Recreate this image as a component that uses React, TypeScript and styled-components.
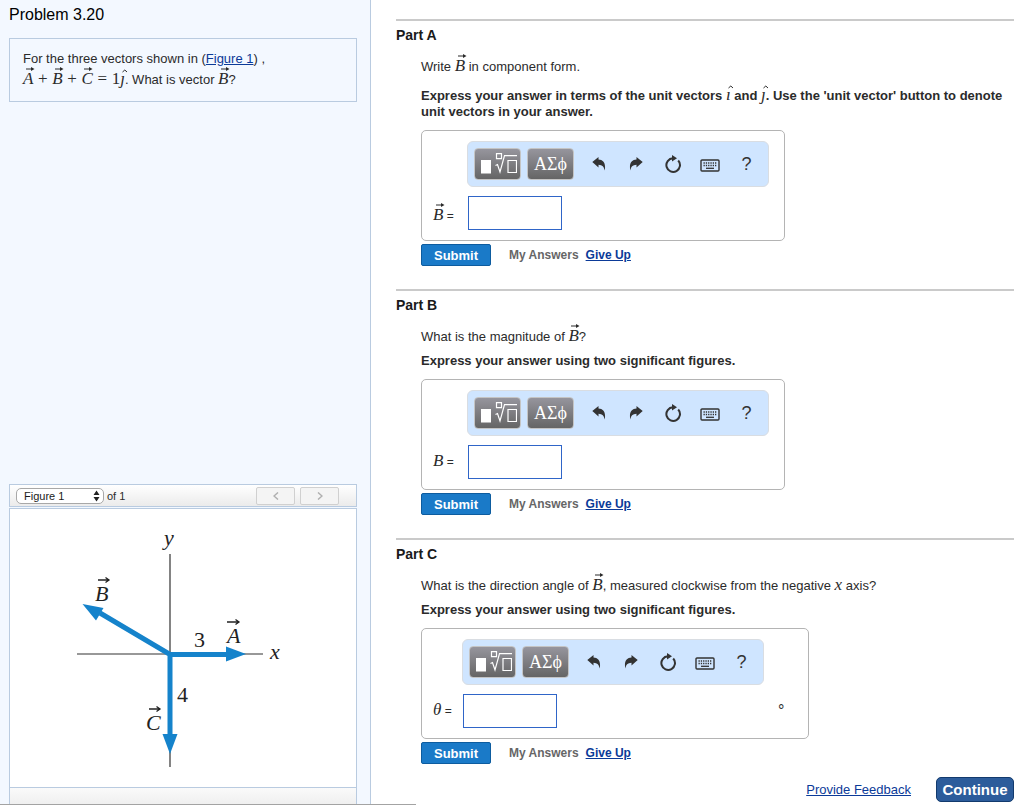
import React, { useId } from "react";
import styled, { createGlobalStyle } from "styled-components";

const GlobalStyle = createGlobalStyle`
  * { box-sizing: border-box; }
  body {
    margin: 0;
    background: #fff;
    color: #2b2b2b;
    font: 13px/16px "Liberation Sans", Arial, sans-serif;
  }
  h1, h2, p, figure { margin: 0; }
  button, input, select { font-family: inherit; }
`;

const Page = styled.div`
  display: grid;
  grid-template-columns: 371px minmax(0, 1fr);
  min-height: 100vh;
`;

const Sidebar = styled.aside`
  display: flex;
  flex-direction: column;
  padding: 6px 13px 0 9px;
  background: #f3f8ff;
  border-right: 1px solid #b9cbe0;
`;

const ProblemTitle = styled.h1`
  font-size: 16px;
  font-weight: 400;
  line-height: 18px;
  color: #000;
`;

const ProblemBox = styled.p`
  margin-top: 14px;
  padding: 12px 13px 13px;
  border: 1px solid #b9cbe0;
`;

const TextLink = styled.a<{ $strong?: boolean }>`
  color: #0b3a98;
  font-weight: ${(p) => (p.$strong ? 700 : 400)};
  text-decoration: underline;
`;

const FigurePanel = styled.section`
  margin-top: auto;
`;

const FigureBar = styled.div`
  display: flex;
  align-items: center;
  gap: 3px;
  height: 23px;
  padding: 0 17px 0 6px;
  border: 1px solid #b9cbe0;
  background: linear-gradient(#fff, #ebebeb);
  font-size: 11px;
`;

const SelectWrap = styled.span`
  display: grid;
  align-items: center;
  width: 88px;
  & > * { grid-area: 1 / 1; }
  & > svg { justify-self: end; margin-right: 4px; pointer-events: none; }
`;

const FigureSelect = styled.select`
  appearance: none;
  width: 100%;
  height: 16px;
  padding: 0 7px;
  border: 1px solid #a8a8a8;
  border-radius: 5px;
  background: #fff;
  color: #1a1a1a;
  font-size: 11px;
  line-height: 14px;
`;

const Pager = styled.span`
  display: flex;
  gap: 5px;
  margin-left: auto;
`;

const PagerButton = styled.button`
  display: flex;
  align-items: center;
  justify-content: center;
  width: 39px;
  height: 18px;
  padding: 0;
  border: 1px solid #d0d0d0;
  border-radius: 2px;
  background: #f4f4f4;
  color: #b0b0b0;
`;

const FigureFrame = styled.figure`
  margin-top: 1px;
  border: 1px solid #b9cbe0;
  border-bottom: 0;
  background: #fff;
  & > svg { display: block; }
`;

const FigureFooter = styled.div`
  height: 18px;
  border-top: 1px solid #b9cbe0;
  background: linear-gradient(#fafafa, #efefef);
`;

const StatusEdge = styled.div`
  position: fixed;
  left: 0;
  bottom: 0;
  width: 416px;
  height: 1px;
  background: #a3a3a3;
`;

const Main = styled.main`
  padding: 19px 10px 2px 25px;
`;

const PartSection = styled.section`
  padding: 5px 0 23px;
  border-top: 2px solid #cacaca;
`;

const PartTitle = styled.h2`
  font-size: 14px;
  line-height: 18px;
  color: #1a1a1a;
`;

const PartBody = styled.div`
  padding-left: 25px;
`;

const Question = styled.p`
  margin-top: 10px;
`;

const Instructions = styled.p`
  margin-top: 8px;
  font-weight: 700;
`;

const AnswerBox = styled.div<{ $labelWidth: number; $wide?: boolean }>`
  display: grid;
  grid-template-columns: ${(p) => p.$labelWidth}px 302px auto;
  align-items: center;
  row-gap: 9px;
  width: fit-content;
  min-width: ${(p) => (p.$wide ? 388 : 364)}px;
  margin-top: 10px;
  padding: 10px 10px 10px 11px;
  border: 1px solid #b4b4b4;
  border-radius: 5px;
`;

const Toolbar = styled.div`
  grid-column: 2;
  display: flex;
  align-items: center;
  height: 46px;
  padding-left: 6px;
  border: 1px solid #d9dde2;
  border-radius: 6px;
  background: #cfe5ff;
`;

const PaletteButton = styled.button`
  display: flex;
  align-items: center;
  justify-content: center;
  width: 47px;
  height: 32px;
  margin-right: 6px;
  padding: 0;
  border: 1px solid #c4c4c4;
  border-radius: 4px;
  background: linear-gradient(#96959d, #656565);
  color: #fff;
  font: 18px/20px "Liberation Serif", "Times New Roman", serif;
`;

const IconButton = styled.button`
  display: flex;
  align-items: center;
  justify-content: center;
  width: 37px;
  height: 32px;
  padding: 0;
  border: 0;
  background: none;
  color: #333;
  font-size: 18px;
  line-height: 20px;
`;

const AnswerLabel = styled.label`
  grid-column: 1;
  white-space: nowrap;
  font-size: 12px;
`;

const AnswerInput = styled.input`
  width: 94px;
  height: 34px;
  margin-left: 1px;
  padding: 0 6px;
  border: 1px solid #2f65c8;
  border-radius: 0;
  background: #fff;
  font-size: 16px;
`;

const Unit = styled.span`
  padding-left: 14px;
  font-size: 16px;
`;

const Actions = styled.div`
  display: flex;
  align-items: center;
  margin-top: 3px;
  color: #666;
  font-size: 12px;
  font-weight: 700;
`;

const SubmitButton = styled.button`
  width: 70px;
  height: 22px;
  margin-right: 18px;
  padding: 0;
  border: 1px solid #0d5c9f;
  border-radius: 2px;
  background: #1a7ac8;
  color: #fff;
  font-size: 13px;
  font-weight: 700;
`;

const GiveUp = styled.span`
  margin-left: 7px;
`;

const PageFooter = styled.footer`
  display: flex;
  align-items: center;
  justify-content: flex-end;
  gap: 25px;
  margin-top: -10px;
`;

const ContinueButton = styled.button`
  width: 78px;
  height: 25px;
  padding: 0;
  border: 1px solid #123a6d;
  border-radius: 5px;
  background: #2c5c9b;
  color: #fff;
  font-size: 15px;
  font-weight: 700;
`;

const Symbol = styled.i`
  font-family: "Liberation Serif", "Times New Roman", serif;
  font-size: 17px;
  font-weight: 400;
  line-height: 14px;
`;

const Upright = styled(Symbol)`
  font-style: normal;
`;

const Operator = styled(Upright)`
  margin: 0 1px;
`;

const Accented = styled(Symbol)<{ $top: number; $left: number }>`
  position: relative;
  display: inline-block;
  padding-top: 5px;
  & > svg {
    position: absolute;
    top: ${(p) => p.$top}px;
    left: ${(p) => p.$left}px;
  }
`;

const Vec = ({ name }: { name: string }) => (
  <Accented $top={0} $left={3}>
    {name}
    <svg width="9" height="4" viewBox="0 0 9 4" aria-hidden="true">
      <path d="M0 2H6.5" fill="none" stroke="currentColor" />
      <path d="M5 0L8.500 2L5 4Z" fill="currentColor" />
    </svg>
  </Accented>
);

const Hat = ({ name }: { name: string }) => (
  <Accented $top={2} $left={2}>
    {name}
    <svg width="6" height="4" viewBox="0 0 6 4" aria-hidden="true">
      <path d="M0.500 3L2.800 1L5 3" fill="none" stroke="currentColor" />
    </svg>
  </Accented>
);

const TemplateIcon = () => (
  <svg width="38" height="22" viewBox="0 0 38 22" aria-hidden="true">
    <rect x="2" y="7" width="10" height="13.500" fill="#fff" />
    <path
      d="M17.500 0.600h5v5h-5zM16.500 12.500l2-1l2.500 7.500L25.500 2.700H38M29 7.500h8.500v12h-8.500z"
      fill="none"
      stroke="#fff"
      strokeWidth="1.200"
    />
  </svg>
);

const UndoIcon = ({ flip }: { flip?: boolean }) => (
  <svg width="14" height="14" viewBox="0 0 14 14" aria-hidden="true">
    <path
      transform={flip ? "matrix(-1 0 0 1 14 0)" : undefined}
      d="M0.300 5L6.500 0V2.600C11.500 2.800 14.200 7 12.600 13.500C12 9.800 10.500 8 6.500 7.800V10.500Z"
      fill="currentColor"
    />
  </svg>
);

const ResetIcon = () => (
  <svg width="18" height="18" viewBox="0 0 18 18" aria-hidden="true">
    <path d="M14.200 5.500A6.800 6.800 0 1 1 9 3.300" fill="none" stroke="currentColor" strokeWidth="2" />
    <path d="M8 0L13 3.200L8 6.400Z" fill="currentColor" />
  </svg>
);

const KeyboardIcon = () => (
  <svg width="20" height="16" viewBox="0 0 20 16" aria-hidden="true">
    <rect x="1" y="4" width="18" height="11" rx="1" fill="none" stroke="currentColor" strokeWidth="1.400" />
    <path d="M3.500 7H17M3.500 9.500H17" fill="none" stroke="currentColor" strokeWidth="1.300" strokeDasharray="1.300 1" />
    <path d="M6 12.300H14" fill="none" stroke="currentColor" strokeWidth="1.300" />
  </svg>
);

const FigureText = styled.text<{ $upright?: boolean }>`
  font-family: "Liberation Serif", "Times New Roman", serif;
  font-size: 22px;
  font-style: ${(p) => (p.$upright ? "normal" : "italic")};
  fill: #222;
`;

const VectorDiagram = () => (
  <svg width="100%" height="278" viewBox="0 0 346 278" preserveAspectRatio="xMinYMin" role="img" aria-label="Vectors A, B and C on x and y axes">
    <path d="M160 45V258M67 145H253" stroke="#333" strokeWidth="1.200" />
    <path d="M90 104L160 145.500H218M160 144V228" fill="none" stroke="#1583cb" strokeWidth="5" />
    <path d="M236 145L216 137.500V152.500ZM160 245L152.500 225H167.500ZM72.500 95L93.500 99L86 111.500Z" fill="#1583cb" />
    <FigureText x="154" y="36">y</FigureText>
    <FigureText x="260" y="150">x</FigureText>
    <FigureText x="85" y="92">B</FigureText>
    <FigureText x="217" y="134">A</FigureText>
    <FigureText x="136" y="221">C</FigureText>
    <FigureText x="184" y="138" $upright>3</FigureText>
    <FigureText x="167" y="193" $upright>4</FigureText>
    <path
      d="M88 71H98M95.500 68.500L99 71L95.500 73.500M217 113H228M225.500 110.500L229 113L225.500 115.500M139 200H149M146.500 197.500L150 200L146.500 202.500"
      fill="none"
      stroke="#222"
      strokeWidth="1.300"
    />
  </svg>
);

interface PartProps {
  title: string;
  question: React.ReactNode;
  instructions: React.ReactNode;
  label: React.ReactNode;
  labelWidth?: number;
  unit?: string;
}

const Part = ({ title, question, instructions, label, labelWidth = 34, unit }: PartProps) => {
  const id = useId();
  return (
    <PartSection>
      <PartTitle>{title}</PartTitle>
      <PartBody>
        <Question>{question}</Question>
        <Instructions>{instructions}</Instructions>
        <AnswerBox $labelWidth={labelWidth} $wide={Boolean(unit)}>
          <Toolbar>
            <PaletteButton type="button" aria-label="Templates"><TemplateIcon /></PaletteButton>
            <PaletteButton type="button">ΑΣϕ</PaletteButton>
            <IconButton type="button" aria-label="Undo"><UndoIcon /></IconButton>
            <IconButton type="button" aria-label="Redo"><UndoIcon flip /></IconButton>
            <IconButton type="button" aria-label="Reset"><ResetIcon /></IconButton>
            <IconButton type="button" aria-label="Keyboard shortcuts"><KeyboardIcon /></IconButton>
            <IconButton type="button">?</IconButton>
          </Toolbar>
          <AnswerLabel htmlFor={id}>{label} =</AnswerLabel>
          <AnswerInput id={id} type="text" />
          {unit && <Unit>{unit}</Unit>}
        </AnswerBox>
        <Actions>
          <SubmitButton type="button">Submit</SubmitButton>
          <span>My Answers</span>
          <GiveUp><TextLink href="#give-up" $strong>Give Up</TextLink></GiveUp>
        </Actions>
      </PartBody>
    </PartSection>
  );
};

export default function App() {
  return (
    <>
      <GlobalStyle />
      <Page>
        <Sidebar>
          <ProblemTitle>Problem 3.20</ProblemTitle>
          <ProblemBox>
            For the three vectors shown in (<TextLink href="#figure">Figure 1</TextLink>) ,
            <br />
            <Vec name="A" /> <Operator>+</Operator> <Vec name="B" /> <Operator>+</Operator> <Vec name="C" />{" "}
            <Operator>=</Operator> <Upright>1</Upright><Hat name="ȷ" />. What is vector <Vec name="B" />?
          </ProblemBox>
          <FigurePanel id="figure">
            <FigureBar>
              <SelectWrap>
                <FigureSelect aria-label="Figure">
                  <option>Figure 1</option>
                </FigureSelect>
                <svg width="7" height="12" viewBox="0 0 7 12" aria-hidden="true">
                  <path d="M0.500 5L3.500 0.500L6.500 5ZM0.500 7L3.500 11.500L6.500 7Z" fill="#222" />
                </svg>
              </SelectWrap>
              <span>of 1</span>
              <Pager>
                <PagerButton type="button" aria-label="Previous figure">
                  <svg width="6" height="8" viewBox="0 0 6 8"><path d="M5 0.500L1 4L5 7.500" fill="none" stroke="currentColor" strokeWidth="1.500" /></svg>
                </PagerButton>
                <PagerButton type="button" aria-label="Next figure">
                  <svg width="6" height="8" viewBox="0 0 6 8"><path d="M1 0.500L5 4L1 7.500" fill="none" stroke="currentColor" strokeWidth="1.500" /></svg>
                </PagerButton>
              </Pager>
            </FigureBar>
            <FigureFrame>
              <VectorDiagram />
              <FigureFooter />
            </FigureFrame>
          </FigurePanel>
        </Sidebar>
        <Main>
          <Part
            title="Part A"
            question={<>Write <Vec name="B" /> in component form.</>}
            instructions={
              <>
                Express your answer in terms of the unit vectors <Hat name="ı" /> and <Hat name="ȷ" />. Use the 'unit
                vector' button to denote{" "}
                {"unit vectors in your answer."}
              </>
            }
            label={<Vec name="B" />}
          />
          <Part
            title="Part B"
            question={<>What is the magnitude of <Vec name="B" />?</>}
            instructions="Express your answer using two significant figures."
            label={<Symbol>B</Symbol>}
          />
          <Part
            title="Part C"
            question={
              <>
                What is the direction angle of <Vec name="B" />, measured clockwise from the negative{" "}
                <Symbol>x</Symbol> axis?
              </>
            }
            instructions="Express your answer using two significant figures."
            label={<Symbol>θ</Symbol>}
            labelWidth={29}
            unit="°"
          />
          <PageFooter>
            <TextLink href="#feedback">Provide Feedback</TextLink>
            <ContinueButton type="button">Continue</ContinueButton>
          </PageFooter>
        </Main>
      </Page>
      <StatusEdge />
    </>
  );
}
